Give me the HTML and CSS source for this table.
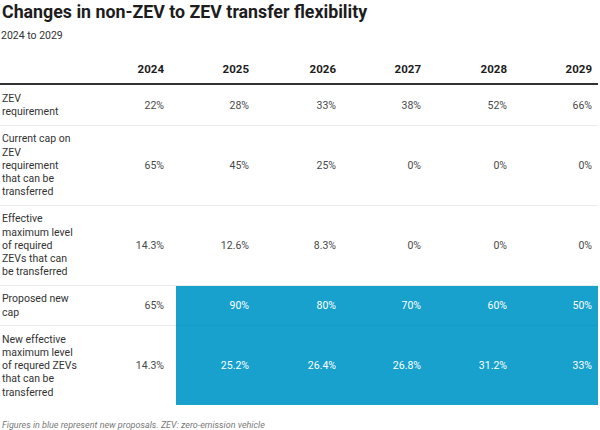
FILE: index.html
```html
<!DOCTYPE html>
<html lang="en">
<head>
<meta charset="utf-8">
<title>Changes in non-ZEV to ZEV transfer flexibility</title>
<link rel="stylesheet" href="styles.css">
</head>
<body>
<div class="chart">
  <h1 class="title">Changes in non-ZEV to ZEV transfer flexibility</h1>
  <p class="subtitle">2024 to 2029</p>
  <table class="data">
    <colgroup>
      <col class="c-label">
      <col class="c-2024">
      <col class="c-mid">
      <col class="c-wide">
      <col class="c-mid">
      <col class="c-wide2">
      <col class="c-last">
    </colgroup>
    <thead>
      <tr>
        <th class="label"></th>
        <th>2024</th>
        <th>2025</th>
        <th>2026</th>
        <th>2027</th>
        <th>2028</th>
        <th class="last">2029</th>
      </tr>
    </thead>
    <tbody>
      <tr>
        <td class="label">ZEV requirement</td>
        <td>22%</td><td>28%</td><td>33%</td><td>38%</td><td>52%</td><td class="last">66%</td>
      </tr>
      <tr>
        <td class="label">Current cap on ZEV requirement that can be transferred</td>
        <td>65%</td><td>45%</td><td>25%</td><td>0%</td><td>0%</td><td class="last">0%</td>
      </tr>
      <tr>
        <td class="label">Effective maximum level of required ZEVs that can be transferred</td>
        <td>14.3%</td><td>12.6%</td><td>8.3%</td><td>0%</td><td>0%</td><td class="last">0%</td>
      </tr>
      <tr class="proposed first">
        <td class="label">Proposed new cap</td>
        <td>65%</td>
        <td class="hl">90%</td><td class="hl">80%</td><td class="hl">70%</td><td class="hl">60%</td><td class="hl last">50%</td>
      </tr>
      <tr class="proposed second">
        <td class="label">New effective maximum level of requred ZEVs that can be transferred</td>
        <td>14.3%</td>
        <td class="hl">25.2%</td><td class="hl">26.4%</td><td class="hl">26.8%</td><td class="hl">31.2%</td><td class="hl last">33%</td>
      </tr>
    </tbody>
  </table>
  <p class="notes">Figures in blue represent new proposals. ZEV: zero-emission vehicle</p>
</div>
</body>
</html>
```

FILE: styles.css
```css
html, body {
  margin: 0;
  padding: 0;
  background: #ffffff;
}

body {
  font-family: Roboto, "Liberation Sans", sans-serif;
  color: #333333;
}

.chart {
  width: 598px;
  padding-top: 1px;
}

.title {
  margin: 0;
  padding-left: 2px;
  font-size: 17.8px;
  line-height: 21px;
  font-weight: 700;
  color: #1d1d1d;
}

.subtitle {
  margin: 7px 0 0;
  padding-left: 1px;
  font-size: 10.5px;
  line-height: 13.2px;
  color: #333333;
}

.data {
  margin-top: 15px;
  width: 598px;
  table-layout: fixed;
  border-collapse: collapse;
  font-size: 10.5px;
  line-height: 13.2px;
}

.c-label { width: 78px; }
.c-2024 { width: 98px; }
.c-mid { width: 85px; }
.c-wide { width: 87px; }
.c-wide2 { width: 86px; }
.c-last { width: 79px; }

.data th {
  font-size: 11.5px;
  line-height: 13.2px;
  font-weight: 700;
  color: #1d1d1d;
  text-align: right;
  vertical-align: bottom;
  padding: 6px 12px 7px 0;
  border-bottom: 2px solid #333333;
}

.data td {
  text-align: right;
  vertical-align: middle;
  padding: 6.5px 12px 6.5px 0;
  color: #494949;
  border-bottom: 1px solid #ececec;
}

.data .label {
  text-align: left;
  padding-left: 2px;
  padding-right: 0;
  color: #333333;
}

.data .last {
  padding-right: 6px;
}

.data td.hl {
  background: #18a1cd;
  color: #ffffff;
}

.data tr.first td.hl {
  border-bottom-color: #1699c4;
}

.data tr.second td {
  border-bottom: 1px solid #ffffff;
}

.notes {
  margin: 13px 0 0;
  padding-left: 2px;
  font-size: 9px;
  line-height: 12px;
  font-style: italic;
  color: #7a7a7a;
}
```
